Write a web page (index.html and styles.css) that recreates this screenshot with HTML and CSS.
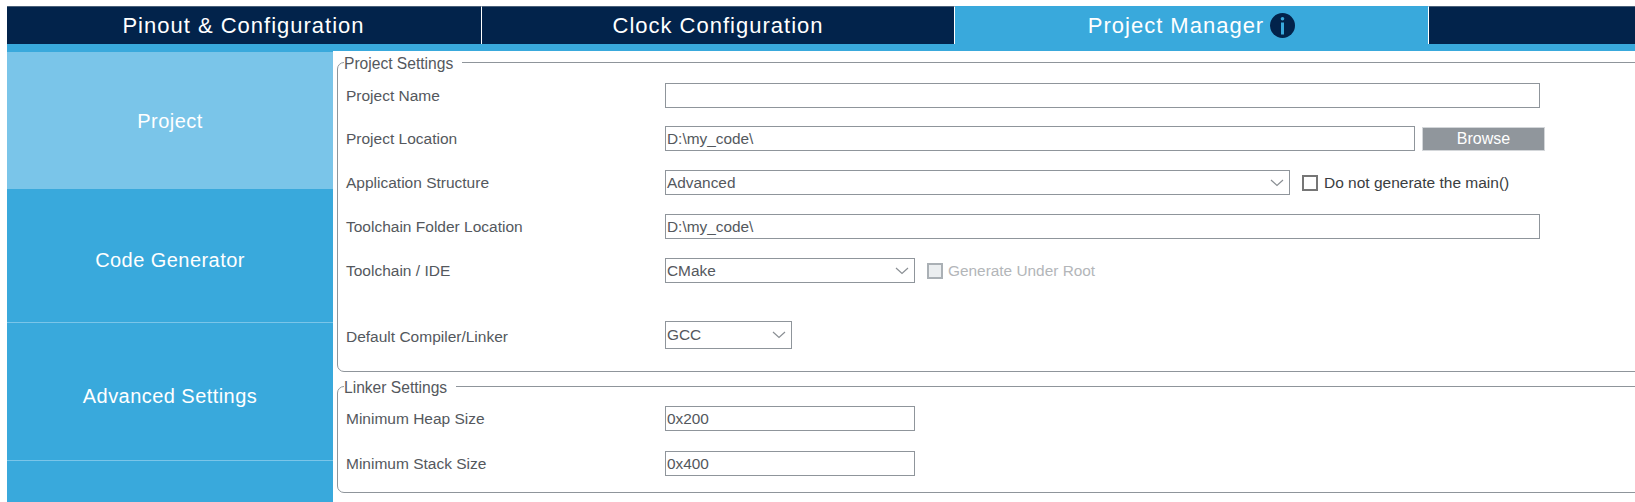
FILE: index.html
```html
<!DOCTYPE html>
<html lang="en">
<head>
  <meta charset="utf-8">
  <title>Project Manager</title>
  <link rel="stylesheet" href="styles.css">
</head>
<body>
<div id="tabs">
  <a class="tab">Pinout &amp; Configuration</a>
  <a class="tab">Clock Configuration</a>
  <a class="tab on">Project Manager
    <svg class="info" width="25" height="25" viewBox="0 0 25 25">
      <circle cx="12.5" cy="12.5" r="12.5" fill="#02234b"/>
      <rect x="11" y="9.5" width="3" height="12" fill="#39a9dc"/>
      <circle cx="12.5" cy="5.8" r="1.8" fill="#39a9dc"/>
    </svg>
  </a>
  <div class="tab-rest"></div>
</div>
<div id="content">
  <div id="side">
    <a class="item on">Project</a>
    <a class="item">Code Generator</a>
    <a class="item">Advanced Settings</a>
    <a class="item"></a>
  </div>
  <div id="main">
    <fieldset class="group project">
      <legend>Project Settings</legend>
      <div class="row first">
        <label>Project Name</label>
        <input class="field wide" type="text" value="">
      </div>
      <div class="row">
        <label>Project Location</label>
        <input class="field loc" type="text" value="D:\my_code\">
        <button class="browse">Browse</button>
      </div>
      <div class="row">
        <label>Application Structure</label>
        <div class="field select app">
          <span>Advanced</span>
          <svg class="chev" width="14" height="8" viewBox="0 0 14 8"><path d="M1 1l6 5.5L13 1" fill="none" stroke="#8a8f94" stroke-width="1.2"/></svg>
        </div>
        <label class="check"><input type="checkbox">Do not generate the main()</label>
      </div>
      <div class="row">
        <label>Toolchain Folder Location</label>
        <input class="field wide" type="text" value="D:\my_code\">
      </div>
      <div class="row">
        <label>Toolchain / IDE</label>
        <div class="field select mid">
          <span>CMake</span>
          <svg class="chev" width="14" height="8" viewBox="0 0 14 8"><path d="M1 1l6 5.5L13 1" fill="none" stroke="#8a8f94" stroke-width="1.2"/></svg>
        </div>
        <label class="check off"><input type="checkbox" disabled>Generate Under Root</label>
      </div>
      <div class="row tall">
        <label>Default Compiler/Linker</label>
        <div class="field select small">
          <span>GCC</span>
          <svg class="chev" width="14" height="8" viewBox="0 0 14 8"><path d="M1 1l6 5.5L13 1" fill="none" stroke="#8a8f94" stroke-width="1.2"/></svg>
        </div>
      </div>
    </fieldset>
    <fieldset class="group linker">
      <legend>Linker Settings</legend>
      <div class="row first">
        <label>Minimum Heap Size</label>
        <input class="field mid" type="text" value="0x200">
      </div>
      <div class="row">
        <label>Minimum Stack Size</label>
        <input class="field mid" type="text" value="0x400">
      </div>
    </fieldset>
  </div>
</div>
</body>
</html>
```
FILE: styles.css
```css
html,body{margin:0;padding:0;height:100%;overflow:hidden;background:#fff;}
body{padding:6px 0 0 7px;box-sizing:border-box;font-family:"Liberation Sans",Arial,sans-serif;font-size:15.5px;color:#54585d;}
a{text-decoration:none;}

#tabs{display:flex;height:38px;background:#02234b;}
.tab{width:473px;flex:none;display:flex;align-items:center;justify-content:center;gap:6px;box-sizing:border-box;border-right:1px solid #fff;border-top:1px solid #4a6079;font-size:22px;letter-spacing:1px;color:#fff;}
.tab.on{background:#39a9dc;border-top-color:#39a9dc;}
.tab:first-child{width:475px;padding-right:1px;}
.tab:nth-child(3){width:474px;}
.tab-rest{flex:1;border-top:1px solid #4a6079;}

#content{display:flex;height:458px;border-top:7px solid #39a9dc;}
#side{width:326px;flex:none;display:flex;flex-direction:column;background:#39a9dc;}
.item{display:flex;align-items:center;justify-content:center;box-sizing:border-box;color:#fff;font-size:20px;letter-spacing:.45px;border-bottom:1px solid #7ac5e9;padding-top:9px;height:138px;}
.item.on{background:#7ac5e9;margin-top:1px;height:137px;padding-top:2px;border-bottom:0;}
.item:nth-child(2){height:134px;}
.item:nth-child(3){padding-top:10px;}
.item:last-child{border-bottom:0;padding:0;flex:1;}

#main{flex:1;min-width:0;padding:2px 0 0 4px;}
.group{margin:0 -20px 0 0;padding:0 0 0 8px;border:1px solid #8f959b;border-radius:7px;box-sizing:border-box;}
.group legend{padding:4px 9px 0 0;margin-left:-2px;line-height:14px;font-size:15.6px;color:#54585d;}
.project{height:319px;}
.linker{margin-top:5px;height:116px;}

.row{display:flex;align-items:center;margin-bottom:19px;}
.row.first{margin-top:12px;margin-bottom:18px;}
.linker .row.first{margin-top:11px;margin-bottom:20px;}
.row.tall{margin-top:38px;}
.row>label:first-child{width:319px;flex:none;padding-top:1px;}
.row.tall>label:first-child{padding-top:3px;}

.field{box-sizing:border-box;height:25px;border:1px solid #8f959b;border-radius:0;padding:0 1px;margin:0;font:15.4px "Liberation Sans",Arial,sans-serif;color:#54585d;background:#fff;outline:none;}
.wide{width:875px;}
.loc{width:750px;}
.mid{width:250px;}
.app{width:625px;}
.small{width:127px;height:28px;}
.select{display:flex;align-items:center;justify-content:space-between;padding-right:5px;}
.chev{flex:none;}

.browse{box-sizing:border-box;width:123px;height:24px;margin:1px 0 0 7px;border:1px solid #d3d6d9;background:#90969c;color:#fff;font:16px "Liberation Sans",Arial,sans-serif;padding:0;}

.check{display:flex;align-items:center;gap:6px;margin-left:12px;color:#3a3d41;}
.check input{appearance:none;box-sizing:border-box;width:16px;height:16px;margin:0;border:2px solid #767676;background:#fff;}
.check.off{gap:5px;font-size:15.4px;color:#b3b6b9;}
.check.off input{border:2px solid #aab0b5;background:#ebeef0;}
```
